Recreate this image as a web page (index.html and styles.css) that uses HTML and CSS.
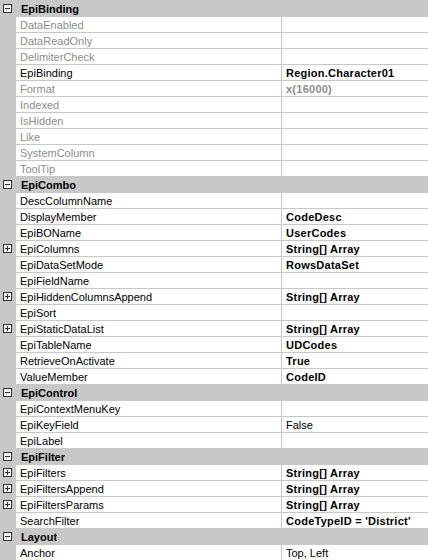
FILE: index.html
```html
<!DOCTYPE html>
<html>
<head>
<meta charset="utf-8">
<link rel="stylesheet" href="styles.css">
</head>
<body>
<div class="grid">
  <div class="cat"><span class="gutter"><span class="box minus"></span></span><span class="cat-label">EpiBinding</span></div>
  <div class="row dis"><span class="gutter"></span><span class="name">DataEnabled</span><span class="val"></span></div>
  <div class="row dis"><span class="gutter"></span><span class="name">DataReadOnly</span><span class="val"></span></div>
  <div class="row dis"><span class="gutter"></span><span class="name">DelimiterCheck</span><span class="val"></span></div>
  <div class="row"><span class="gutter"></span><span class="name">EpiBinding</span><span class="val b">Region.Character01</span></div>
  <div class="row dis"><span class="gutter"></span><span class="name">Format</span><span class="val b">x(16000)</span></div>
  <div class="row dis"><span class="gutter"></span><span class="name">Indexed</span><span class="val"></span></div>
  <div class="row dis"><span class="gutter"></span><span class="name">IsHidden</span><span class="val"></span></div>
  <div class="row dis"><span class="gutter"></span><span class="name">Like</span><span class="val"></span></div>
  <div class="row dis"><span class="gutter"></span><span class="name">SystemColumn</span><span class="val"></span></div>
  <div class="row dis"><span class="gutter"></span><span class="name">ToolTip</span><span class="val"></span></div>

  <div class="cat"><span class="gutter"><span class="box minus"></span></span><span class="cat-label">EpiCombo</span></div>
  <div class="row"><span class="gutter"></span><span class="name">DescColumnName</span><span class="val"></span></div>
  <div class="row"><span class="gutter"></span><span class="name">DisplayMember</span><span class="val b">CodeDesc</span></div>
  <div class="row"><span class="gutter"></span><span class="name">EpiBOName</span><span class="val b">UserCodes</span></div>
  <div class="row"><span class="gutter"><span class="box plus"></span></span><span class="name">EpiColumns</span><span class="val b">String[] Array</span></div>
  <div class="row"><span class="gutter"></span><span class="name">EpiDataSetMode</span><span class="val b">RowsDataSet</span></div>
  <div class="row"><span class="gutter"></span><span class="name">EpiFieldName</span><span class="val"></span></div>
  <div class="row"><span class="gutter"><span class="box plus"></span></span><span class="name">EpiHiddenColumnsAppend</span><span class="val b">String[] Array</span></div>
  <div class="row"><span class="gutter"></span><span class="name">EpiSort</span><span class="val"></span></div>
  <div class="row"><span class="gutter"><span class="box plus"></span></span><span class="name">EpiStaticDataList</span><span class="val b">String[] Array</span></div>
  <div class="row"><span class="gutter"></span><span class="name">EpiTableName</span><span class="val b">UDCodes</span></div>
  <div class="row"><span class="gutter"></span><span class="name">RetrieveOnActivate</span><span class="val b">True</span></div>
  <div class="row"><span class="gutter"></span><span class="name">ValueMember</span><span class="val b">CodeID</span></div>

  <div class="cat"><span class="gutter"><span class="box minus"></span></span><span class="cat-label">EpiControl</span></div>
  <div class="row"><span class="gutter"></span><span class="name">EpiContextMenuKey</span><span class="val"></span></div>
  <div class="row"><span class="gutter"></span><span class="name">EpiKeyField</span><span class="val">False</span></div>
  <div class="row"><span class="gutter"></span><span class="name">EpiLabel</span><span class="val"></span></div>

  <div class="cat"><span class="gutter"><span class="box minus"></span></span><span class="cat-label">EpiFilter</span></div>
  <div class="row"><span class="gutter"><span class="box plus"></span></span><span class="name">EpiFilters</span><span class="val b">String[] Array</span></div>
  <div class="row"><span class="gutter"><span class="box plus"></span></span><span class="name">EpiFiltersAppend</span><span class="val b">String[] Array</span></div>
  <div class="row"><span class="gutter"><span class="box plus"></span></span><span class="name">EpiFiltersParams</span><span class="val b">String[] Array</span></div>
  <div class="row"><span class="gutter"></span><span class="name">SearchFilter</span><span class="val b">CodeTypeID = 'District'</span></div>

  <div class="cat"><span class="gutter"><span class="box minus"></span></span><span class="cat-label">Layout</span></div>
  <div class="row"><span class="gutter"></span><span class="name">Anchor</span><span class="val">Top, Left</span></div>
</div>
</body>
</html>
```
FILE: styles.css
```css
html, body {
  margin: 0;
  padding: 0;
  background: #ffffff;
  overflow: hidden;
}
.grid {
  width: 428px;
  font-family: "Liberation Sans", Arial, sans-serif;
  font-size: 11px;
  color: #000000;
  display: flex;
  flex-direction: column;
  border-top: 1px solid #c8c8c8;
}
.cat, .row {
  display: flex;
  height: 15px;
  border-bottom: 1px solid #c8c8c8;
}
.cat {
  background: #c8c8c8;
}
.gutter {
  width: 16px;
  flex: 0 0 16px;
  background: #c8c8c8;
  position: relative;
}
.box {
  position: absolute;
  left: 3px;
  top: 3px;
  width: 7px;
  height: 7px;
  border: 1px solid #303030;
  background: #f4f4f4;
}
.box::before, .box::after {
  content: "";
  position: absolute;
  background: #303030;
}
.box::before {
  left: 1px;
  top: 3px;
  width: 5px;
  height: 1px;
}
.plus::after {
  left: 3px;
  top: 1px;
  width: 1px;
  height: 5px;
}
.cat-label, .name, .val {
  box-sizing: border-box;
  height: 15px;
  padding-top: 1px;
  line-height: 15px;
  white-space: nowrap;
  overflow: hidden;
}
.cat-label {
  font-weight: bold;
  padding-left: 5px;
}
.name {
  width: 265px;
  flex: 0 0 265px;
  padding-left: 4px;
}
.val {
  flex: 1 1 auto;
  border-left: 1px solid #c8c8c8;
  padding-left: 4px;
}
.val.b {
  font-weight: bold;
  letter-spacing: 0.25px;
}
.dis .name, .dis .val {
  color: #8d8d8d;
}
```
